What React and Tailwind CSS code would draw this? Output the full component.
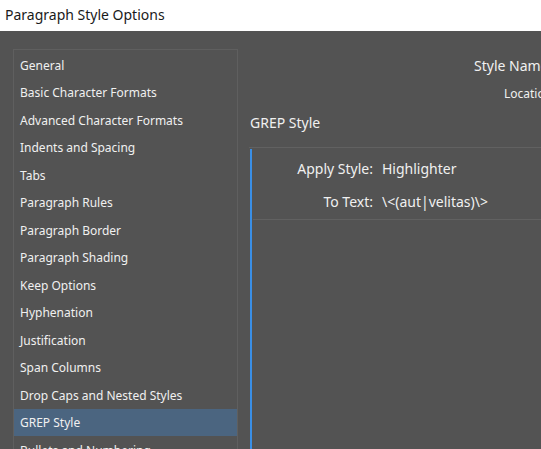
import React from 'react';

const SECTIONS = [
  'General',
  'Basic Character Formats',
  'Advanced Character Formats',
  'Indents and Spacing',
  'Tabs',
  'Paragraph Rules',
  'Paragraph Border',
  'Paragraph Shading',
  'Keep Options',
  'Hyphenation',
  'Justification',
  'Span Columns',
  'Drop Caps and Nested Styles',
  'GREP Style',
  'Bullets and Numbering',
];

const FONT = { fontFamily: '"Segoe UI", "Noto Sans", "Open Sans", sans-serif' };

export default function App() {
  const selected = 'GREP Style';

  return (
    <div className="w-[541px] h-[449px] overflow-hidden flex flex-col bg-[#535353]" style={FONT}>
      <div className="h-[31px] shrink-0 bg-white flex items-center pl-[5px] pb-[2px] text-[14px] text-[#1a1a1a]">
        Paragraph Style Options
      </div>

      <div className="flex flex-1 min-h-0">
        {/* section list */}
        <div className="ml-[13px] mt-[18px] w-[225px] shrink-0 border border-[#5f5f5f] border-b-0 pt-[1px] overflow-hidden">
          {SECTIONS.map((name) => (
            <div
              key={name}
              className={`h-[27.5px] flex items-center pl-[6px] pt-[2px] text-[12px] text-[#f0f0f0] ${
                name === selected ? 'bg-[#4b6580]' : ''
              }`}
            >
              {name}
            </div>
          ))}
        </div>

        {/* right side */}
        <div className="flex-1 ml-[11px] min-w-0 overflow-hidden flex flex-col text-[#f0f0f0]">
          <div className="mt-[24px] pl-[225px] whitespace-nowrap text-[14px] leading-[22px]">Style Name:</div>
          <div className="mt-[8px] pl-[255px] whitespace-nowrap text-[12px] leading-[18px]">Location:</div>
          <div className="mt-[9px] pl-[1px] text-[14px] leading-[22px]">GREP Style</div>

          <div className="mt-[13px] border-t border-[#616161]" />
          <div className="mt-[1px] flex-1 flex flex-col border-l-2 border-[#3a8fe6] ml-[1px]">
            <div className="pt-[7px] flex items-center h-[32px] text-[14px]">
              <span className="w-[121px] text-right">Apply Style:</span>
              <span className="ml-[9px]">Highlighter</span>
            </div>
            <div className="flex items-center h-[38px] pt-[2px] text-[14px]">
              <span className="w-[121px] text-right">To Text:</span>
              <span className="ml-[9px]">{'\\<(aut|velitas)\\>'}</span>
            </div>
            <div className="ml-[1px] border-t border-[#616161]" />
          </div>
        </div>
      </div>
    </div>
  );
}
